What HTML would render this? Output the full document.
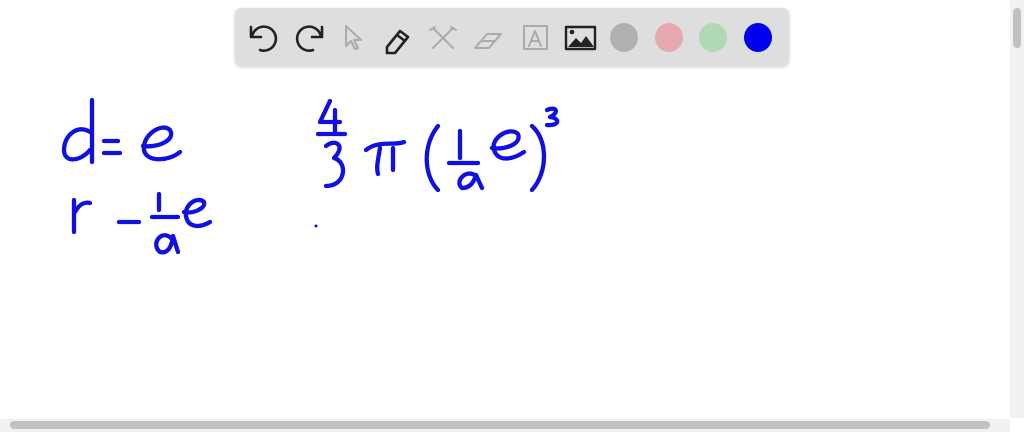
<!DOCTYPE html>
<html><head><style>
body{margin:0;width:1024px;height:432px;background:#fff;position:relative;overflow:hidden;font-family:"Liberation Sans",sans-serif}
.tb{position:absolute;left:235px;top:8px;width:554px;height:58px;background:#dedede;border-radius:6px;box-shadow:0 1px 3px rgba(0,0,0,.2)}
.c{position:absolute;top:23px;width:28px;height:29px;border-radius:50%}
</style></head><body>
<div class="tb"></div>
<svg style="position:absolute;left:0;top:0" width="1024" height="432" fill="none" stroke-linecap="round" stroke-linejoin="round">
<g stroke="#222" stroke-width="2.6">
<path d="M251 27 v10 h10 M252 37 A12 12 0 1 1 260 50"/>
<path d="M322 27 v10 h-10 M321 37 A12 12 0 1 0 313 50"/>
<path d="M387 47 l13 -16 l8 6 l-13 16 h-8 z M397 35 l8 6"/>
</g>
<g stroke="#aaa" stroke-width="2">
<path d="M346 26 l0 20 l5 -5 l4 8 l3 -1 l-4 -8 l7 0 z"/>
<path d="M433 28 l20 20 M453 28 l-20 20 M430 30 l5 -3 M456 30 l-5 -3"/>
<path d="M475 48 l12 -14 h14 l-12 14 z M481 41 h14"/>
<rect x="524" y="26" width="23" height="23"/><path d="M529 46 l6 -15 l6 15 M531 41 h8"/>
</g>
<rect x="566" y="27" width="29" height="22" stroke="#222" stroke-width="2.4"/>
<path d="M568 47 l8 -9 l5 5 l5 -7 l8 11 z" fill="#222"/><circle cx="572" cy="32" r="2.3" fill="#222"/>
<g stroke="#1010e0" stroke-width="4.3">
<path d="M90 132 C78 124 64 135 64 150 C64 163 80 162 90 150 M92 100 V162"/>
<path d="M104 141 H118 M104 153 H120"/>
<path d="M143 146 C158 148 176 140 170 130 C162 122 142 135 144 150 C146 162 168 162 180 152"/>
<path d="M74 200 V232 M75 212 C80 203 86 202 90 203"/>
<path d="M119 222 H139"/>
<path d="M159 194 V210 M152 217 H178 M172 239 C162 228 150 244 160 252 C168 254 172 246 173 236 L178 252"/>
<path d="M184 212 C194 214 206 208 204 202 C198 196 184 204 186 216 C188 228 200 228 210 222"/>
<path d="M330 101 L320 122 H340 M335 110 V132 M318 134 H345"/>
<path d="M326 146 C336 138 346 146 334 158 C348 162 346 186 326 186"/>
<path d="M366 150 C378 140 395 146 404 142 M380 148 C378 160 376 168 378 174 M393 148 V170"/>
<path d="M438 126 C422 146 424 176 438 190"/>
<path d="M460 131 V158 M449 163 H478 M476 176 C466 168 454 182 462 188 C470 188 474 182 476 175 L482 188"/>
<path d="M492 148 C505 150 522 144 518 134 C510 126 490 138 494 150 C498 162 512 160 524 152"/>
<path d="M532 126 C548 140 548 172 532 190"/>
<path d="M547 110 C556 106 560 112 550 117 C560 118 560 126 547 125"/>
</g>
<circle cx="316" cy="226" r="1.5" fill="#1010e0"/>
</svg>
<div class="c" style="left:610px;background:#b0b0b0"></div>
<div class="c" style="left:655px;background:#e4a8ae"></div>
<div class="c" style="left:699px;background:#b0d8b2"></div>
<div class="c" style="left:744px;background:#0000ee"></div>
<div style="position:absolute;right:0;top:0;width:14px;height:418px;background:#f1f1f1"></div>
<div style="position:absolute;right:3px;top:8px;width:8px;height:40px;background:#c1c1c1;border-radius:4px"></div>
<div style="position:absolute;left:0;bottom:0;width:1010px;height:13px;background:#f1f1f1"></div>
<div style="position:absolute;left:10px;bottom:3px;width:980px;height:8px;background:#c1c1c1;border-radius:4px"></div>
</body></html>
